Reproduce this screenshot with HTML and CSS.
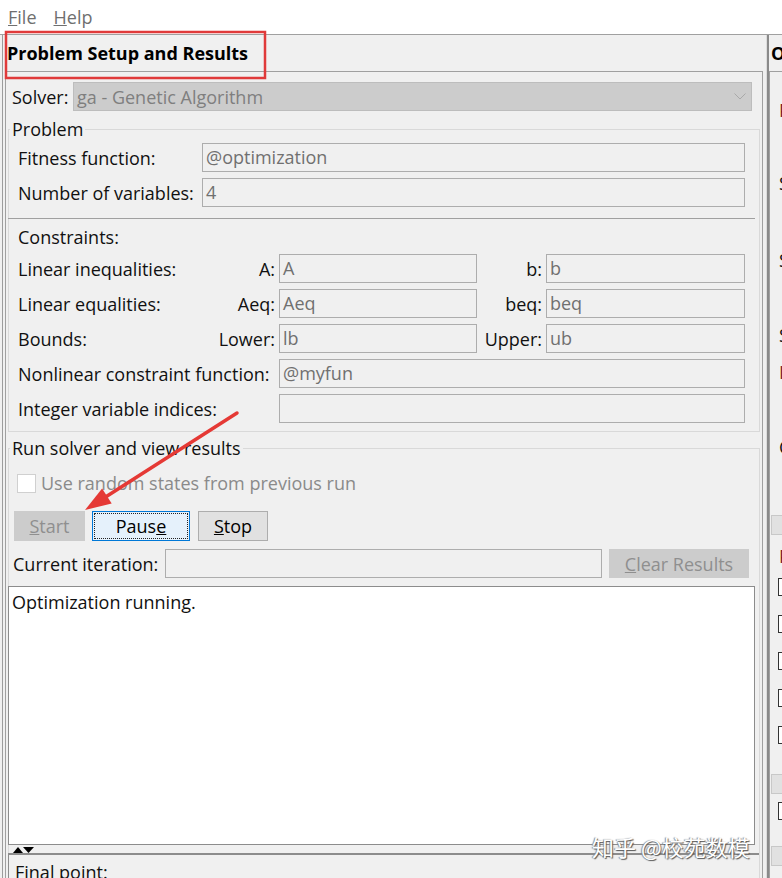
FILE: index.html
```html
<!DOCTYPE html>
<html lang="en">
<head>
  <meta charset="UTF-8">
  <title>Optimization Tool</title>
  <link rel="stylesheet" href="styles.css">
</head>
<body>
  <div class="menubar">
    <span class="menu"><u>F</u>ile</span>
    <span class="menu"><u>H</u>elp</span>
  </div>

  <div class="main">
    <div class="setup">
      <div class="panel-title">Problem Setup and Results</div>

      <div class="setup-body">
        <div class="solver-row">
          <span class="solver-label">Solver:</span>
          <div class="select">
            <span>ga - Genetic Algorithm</span>
            <svg class="chevron" viewBox="0 0 12 7" fill="none" stroke="currentColor" stroke-width="1">
              <polyline points="0.5 0.5 6 6 11.5 0.5"></polyline>
            </svg>
          </div>
        </div>

        <fieldset class="group problem">
          <legend>Problem</legend>
          <div class="frow">
            <span class="flabel">Fitness function:</span>
            <div class="field">@optimization</div>
          </div>
          <div class="frow">
            <span class="flabel">Number of variables:</span>
            <div class="field">4</div>
          </div>

          <div class="sep"></div>
          <div class="constraints-title">Constraints:</div>

          <div class="crow">
            <span class="clabel"><span>Linear inequalities:</span><span>A:</span></span>
            <div class="field half">A</div>
            <span class="key2">b:</span>
            <div class="field">b</div>
          </div>
          <div class="crow">
            <span class="clabel"><span>Linear equalities:</span><span>Aeq:</span></span>
            <div class="field half">Aeq</div>
            <span class="key2">beq:</span>
            <div class="field">beq</div>
          </div>
          <div class="crow">
            <span class="clabel"><span>Bounds:</span><span>Lower:</span></span>
            <div class="field half">lb</div>
            <span class="key2">Upper:</span>
            <div class="field">ub</div>
          </div>
          <div class="crow">
            <span class="clabel"><span>Nonlinear constraint function:</span></span>
            <div class="field wide">@myfun</div>
          </div>
          <div class="crow">
            <span class="clabel"><span>Integer variable indices:</span></span>
            <div class="field wide"></div>
          </div>
        </fieldset>

        <fieldset class="group run">
          <legend>Run solver and view results</legend>
          <div class="check-row">
            <span class="checkbox"></span>
            <span class="check-text">Use random states from previous run</span>
          </div>
          <div class="button-row">
            <button class="btn btn-disabled btn-start"><u>S</u>tart</button>
            <button class="btn btn-focus btn-pause">Paus<u>e</u></button>
            <button class="btn btn-stop"><u>S</u>top</button>
          </div>
          <div class="iter-row">
            <span class="iter-label">Current iteration:</span>
            <div class="field"></div>
            <button class="btn btn-disabled btn-clear"><u>C</u>lear Results</button>
          </div>
          <div class="output">Optimization running.</div>
          <div class="splitter">
            <svg viewBox="0 0 22 7" width="22" height="7">
              <polygon points="0 7 5 1 10 7" fill="#000"></polygon>
              <polygon points="10 1 21 1 15.5 7" fill="#000"></polygon>
            </svg>
          </div>
          <div class="final">Final point:</div>
        </fieldset>
      </div>
    </div>

    <div class="options">
      <div class="options-title">Options</div>
      <div class="options-body">
        <div class="opt opt-head o1">Population</div>
        <div class="opt o2">Scaling function:</div>
        <div class="opt o3">Selection function:</div>
        <div class="opt o4">Stall generations:</div>
        <div class="opt opt-head o5">Initial population:</div>
        <div class="opt o6">Crossover fraction:</div>
        <div class="opt-box o7"></div>
        <div class="opt opt-head o8">Plot functions</div>
        <div class="opt-check o9"></div>
        <div class="opt-check o10"></div>
        <div class="opt-check o10"></div>
        <div class="opt-check o10"></div>
        <div class="opt-check o10"></div>
        <div class="opt-box o11"></div>
        <div class="opt-check o12"></div>
        <div class="opt-box o13"></div>
      </div>
    </div>
  </div>

  <div class="watermark">知乎 @校苑数模</div>

  <svg class="annotations" viewBox="0 0 782 878" width="782" height="878">
    <rect x="6" y="32" width="259" height="46" fill="none" stroke="#e03a3a" stroke-width="2.5"></rect>
    <line x1="237" y1="413" x2="104" y2="498" stroke="#e53935" stroke-width="3.5" stroke-linecap="round"></line>
    <polygon points="85 510 111.7 503.6 102.1 488.4" fill="#e53935"></polygon>
  </svg>
</body>
</html>
```

FILE: styles.css
```css
* {
  box-sizing: border-box;
  margin: 0;
  padding: 0;
}

body {
  width: 782px;
  height: 878px;
  overflow: hidden;
  position: relative;
  font-family: 'Open Sans', 'Noto Sans', sans-serif;
  font-size: 18px;
  line-height: 22px;
  color: #111;
  background-color: #f0f0f0;
}

.menubar {
  height: 34px;
  display: flex;
  align-items: center;
  gap: 17px;
  padding-left: 8px;
  background-color: #fff;
  color: #6f6f6f;
}

.main {
  display: flex;
  height: 844px;
  border-top: 1px solid #a0a0a0;
}

.setup {
  width: 765px;
  margin-left: 2px;
  padding: 0 3px 0 2px;
  border-left: 1px solid #9c9c9c;
  border-right: 1px solid #dcdcdc;
  display: flex;
  flex-direction: column;
}

.panel-title {
  flex: none;
  height: 36px;
  display: flex;
  align-items: center;
  padding-left: 2px;
  font-weight: 700;
  color: #000;
}

.setup-body {
  flex: 1;
  min-height: 0;
  overflow: hidden;
  padding: 10px 2px 0 2px;
  border: 1px solid #a0a0a0;
  border-bottom: none;
}

.solver-row {
  display: flex;
  align-items: center;
  height: 29px;
  padding-left: 4px;
  margin-right: 8px;
}

.solver-label {
  width: 61px;
}

.select {
  flex: 1;
  height: 29px;
  display: flex;
  align-items: center;
  justify-content: space-between;
  padding: 0 5px 0 3px;
  background-color: #cccccc;
  border: 1px solid #bdbdbd;
  color: #7f7f7f;
}

.chevron {
  width: 12px;
  height: 7px;
  color: #a9a9a9;
}

.group {
  border: 1px solid #d9d9d9;
}

.group legend {
  padding: 0 2px;
  line-height: 22px;
}

.problem {
  margin-top: 7px;
  padding: 3px 14px 8px 9px;
}

.problem legend {
  margin-left: -8px;
}

.frow {
  display: flex;
  align-items: center;
  height: 29px;
  margin-bottom: 6px;
}

.flabel {
  width: 184px;
}

.field {
  flex: 1;
  height: 29px;
  padding-left: 3px;
  line-height: 27px;
  background-color: #f0f0f0;
  border: 1px solid #adadad;
  color: #707070;
  white-space: nowrap;
  overflow: hidden;
}

.sep {
  height: 1px;
  margin: 11px -10px 0 -10px;
  background-color: #a0a0a0;
}

.constraints-title {
  margin-top: 7px;
}

.crow {
  display: flex;
  align-items: center;
  height: 29px;
  margin-top: 6px;
}

.clabel {
  width: 257px;
  display: flex;
  justify-content: space-between;
  white-space: nowrap;
}

.crow .field {
  margin-left: 4px;
}

.crow .half {
  flex: none;
  width: 198px;
}

.key2 {
  width: 65px;
  text-align: right;
}

.run {
  margin-top: 5px;
  padding: 0 10px 0 4px;
}

.run legend {
  margin-left: -3px;
}

.check-row {
  display: flex;
  align-items: center;
  height: 24px;
  margin-top: 12px;
}

.checkbox {
  width: 19px;
  height: 19px;
  margin-left: 4px;
  background-color: #fff;
  border: 1px solid #d0d0d0;
}

.check-text {
  margin-left: 5px;
  color: #8a8a8a;
}

.button-row {
  display: flex;
  height: 30px;
  margin-top: 16px;
}

.btn {
  height: 30px;
  font-family: inherit;
  font-size: 18px;
  color: #000;
  border: 1px solid #adadad;
  background-color: #e1e1e1;
}

.btn-disabled {
  color: #8f8f8f;
  background-color: #cccccc;
  border-color: #cccccc;
}

.btn-start {
  width: 71px;
  margin-left: 1px;
}

.btn-focus {
  background-color: #e5f1fb;
  border-color: #0078d7;
  outline: 1px dotted #222;
  outline-offset: -3px;
}

.btn-pause {
  width: 98px;
  margin-left: 7px;
}

.btn-stop {
  width: 70px;
  margin-left: 8px;
}

.iter-row {
  display: flex;
  align-items: center;
  height: 29px;
  margin-top: 8px;
}

.iter-label {
  width: 152px;
}

.btn-clear {
  width: 140px;
  height: 29px;
  margin-left: 7px;
}

.output {
  height: 259px;
  margin: 8px -6px 0 -5px;
  padding: 4px 3px;
  background-color: #fff;
  border: 1px solid #8c8c8c;
}

.splitter {
  height: 8px;
  padding: 1px 0 0 5px;
  margin-left: -5px;
}

.splitter svg {
  display: block;
}

.final {
  height: 40px;
  margin: 0 -10px 0 -5px;
  padding: 6px 0 0 6px;
  border-top: 2px solid #8c8c8c;
  border-left: 1px solid #8c8c8c;
}

.options {
  width: 15px;
  overflow: hidden;
  border-left: 2px solid #8a8a8a;
  display: flex;
  flex-direction: column;
}

.options-title {
  flex: none;
  height: 36px;
  display: flex;
  align-items: center;
  padding-left: 2px;
  font-weight: 700;
  color: #000;
  white-space: nowrap;
}

.options-body {
  flex: 1;
  min-height: 0;
  width: 200px;
  padding-left: 9px;
  border-top: 1px solid #a0a0a0;
  border-left: 1px solid #a0a0a0;
}

.opt {
  white-space: nowrap;
}

.opt-head {
  color: #7f1d1d;
}

.opt-box {
  height: 20px;
  margin-left: -8px;
  background-color: #e1e1e1;
  border: 1px solid #c8c8c8;
}

.opt-check {
  width: 18px;
  height: 18px;
  margin-left: -1px;
  background-color: #fff;
  border: 1px solid #333;
}

.o1 { margin-top: 27px; }
.o2 { margin-top: 51px; }
.o3 { margin-top: 55px; }
.o4 { margin-top: 53px; }
.o5 { margin-top: 15px; }
.o6 { margin-top: 53px; }
.o7 { margin-top: 57px; }
.o8 { margin-top: 10px; }
.o9 { margin-top: 11px; }
.o10 { margin-top: 19px; }
.o11 { margin-top: 30px; }
.o12 { margin-top: 8px; }
.o13 { margin-top: 26px; }

.watermark {
  position: absolute;
  left: 592px;
  top: 833px;
  font-family: 'Noto Sans CJK SC', sans-serif;
  font-size: 22px;
  line-height: 26px;
  color: #fff;
  text-shadow: 1px 1px 1px #555, -1px 0 1px #888;
  white-space: nowrap;
}

.annotations {
  position: absolute;
  left: 0;
  top: 0;
  pointer-events: none;
}
```
